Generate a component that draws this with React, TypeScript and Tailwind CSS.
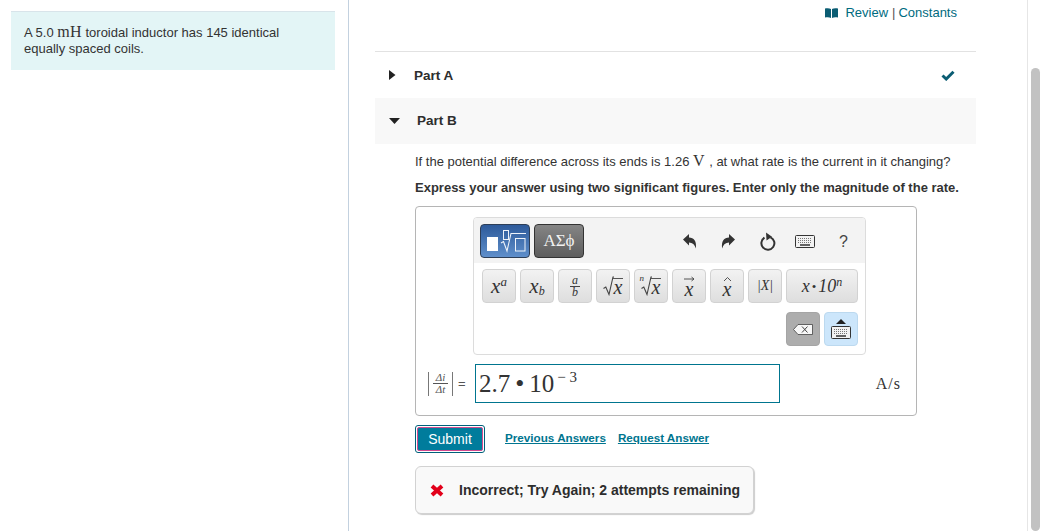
import React from "react";

const serif = "font-['Liberation_Serif','DejaVu_Serif',serif]";

function Kbd({ className = "" }: { className?: string }) {
  return (
    <svg width="20" height="13" viewBox="0 0 20 13" className={className}>
      <rect x="0.500" y="0.500" width="19" height="12" rx="1" fill="#f2f2f2" stroke="#333" />
      <path d="M3 3.500h14M3 5.500h14M3 7.500h14" stroke="#777" strokeWidth="1" strokeDasharray="1 1" />
      <path d="M5 10h10" stroke="#333" strokeWidth="1.400" />
    </svg>
  );
}

function Btn({ children, wide = false }: { children: React.ReactNode; wide?: boolean }) {
  return (
    <div
      className={`${wide ? "w-[72px]" : "w-[34px]"} h-[34px] shrink-0 rounded-[4px] border border-[#d2d2d2] bg-gradient-to-b from-[#f2f2f2] to-[#dedede] flex items-center justify-center text-[#333] ${serif} italic leading-none`}
    >
      {children}
    </div>
  );
}

function Radical() {
  return (
    <svg width="11" height="20" viewBox="0 0 11 20" className="-mr-px">
      <path d="M0.500 12.500L2.800 11L6 18.500L10 1H11" fill="none" stroke="#444" strokeWidth="1.100" />
    </svg>
  );
}

function Rooted() {
  return <span className="border-t border-[#555] text-[20px] leading-[17px] h-[18px] mt-[1px] px-px">x</span>;
}

export default function App() {
  return (
    <div className="w-[1041px] h-[531px] overflow-hidden flex bg-white font-['Liberation_Sans',Arial,sans-serif] text-[#2d2d2d]">
      {/* left */}
      <aside className="w-[349px] shrink-0 h-full border-r border-[#c3d1df] pt-[11px] pl-[11px]">
        <div className="w-[324px] h-[59px] bg-[#e3f5f6] border-t border-[#d8e4ea] pl-[13px] pt-[12px] text-[13px] leading-[16px] text-[#333]">
          <p>
            A 5.0 <span className={`${serif} text-[16px] tracking-[0.3px]`}>mH</span> toroidal inductor has 145 identical
            <br />
            equally spaced coils.
          </p>
        </div>
      </aside>

      {/* main */}
      <main className="w-[678px] shrink-0 h-full pl-[26px]">
        <div className="w-[601px]">
          <div className="h-[51px] flex justify-end pr-[19px] pt-[5px] text-[13px] leading-[15px] text-[#006b80]">
            <div className="flex items-start">
              <svg width="13" height="10" viewBox="0 0 13 10" className="mt-[3px] mr-[7px]">
                <path d="M0 0.500C2 0 4.500 0 6 1V10C4.500 9 2 9 0 9.500Z M7 1C8.500 0 11 0 13 0.500V9.500C11 9 8.500 9 7 10Z" fill="#0b5d73" />
              </svg>
              <span>Review</span>
              <span className="text-[#555] ml-[4px] mr-[3px]">|</span>
              <span>Constants</span>
            </div>
          </div>

          {/* Part A */}
          <div className="h-[47px] border-t border-[#e2e2e2] flex items-center pl-[14px] pr-[21px]">
            <svg width="7" height="10" viewBox="0 0 7 10" className="mr-[18px]">
              <path d="M0 0L6.500 5L0 10Z" fill="#222" />
            </svg>
            <span className="font-bold text-[13.500px] mt-[2px]">Part A</span>
            <svg width="14" height="11" viewBox="0 0 14 11" className="ml-auto">
              <path d="M1.500 5.500L5.200 9L12.500 1.800" fill="none" stroke="#0b5d73" strokeWidth="3" />
            </svg>
          </div>

          {/* Part B */}
          <div className="h-[46px] bg-[#f8f8f8] flex items-center pl-[14px]">
            <svg width="11" height="6" viewBox="0 0 11 6" className="mr-[17px]">
              <path d="M0 0H11L5.500 6Z" fill="#222" />
            </svg>
            <span className="font-bold text-[13.500px]">Part B</span>
          </div>

          <div className="pl-[40px]">
            <p className="mt-[9px] text-[13px] leading-[16px] text-[#333] whitespace-nowrap">
              If the potential difference across its ends is 1.26 <span className={`${serif} text-[16px] pr-px`}>V</span> , at what rate is the current in it changing?
            </p>
            <p className="mt-[10px] text-[13px] leading-[16px] font-bold text-[#333] whitespace-nowrap">
              Express your answer using two significant figures. Enter only the magnitude of the rate.
            </p>

            {/* answer box */}
            <div className="mt-[10px] w-[502px] h-[210px] border border-[#b5b5b5] rounded-[4px] pt-[10px] pl-[57px] pr-[16px]">
              <div className="w-[393px] h-[138px] border border-[#dcdcdc] rounded-[4px] overflow-hidden">
                <div className="h-[45px] bg-[#f3f3f3] flex items-center pl-[6px] pr-[17px]">
                  <div className="w-[50px] h-[34px] rounded-[4px] border border-[#2d3e57] bg-gradient-to-b from-[#2d5a9a] to-[#5f8fcb] flex items-center justify-center">
                    <svg width="44" height="28" viewBox="0 0 44 28">
                      <rect x="4" y="10" width="11" height="14" fill="#fff" />
                      <rect x="20.500" y="3.500" width="5" height="9" fill="none" stroke="#eef3fa" strokeWidth="1" />
                      <path d="M18 16L20.500 14.500L24 24L28 6.500H43" fill="none" stroke="#eef3fa" strokeWidth="1.100" />
                      <rect x="32.500" y="11.500" width="9.500" height="12.500" fill="none" stroke="#eef3fa" strokeWidth="1" />
                    </svg>
                  </div>
                  <div className={`ml-[4px] w-[50px] h-[34px] rounded-[4px] border border-[#333] bg-gradient-to-b from-[#858585] to-[#5e5e5e] flex items-center justify-center text-[#f2f2f2] ${serif} text-[17px]`}>
                    ΑΣϕ
                  </div>
                  <div className="ml-auto flex items-center mt-[2px]">
                    <svg width="14" height="15" viewBox="0 0 14 15" className="mr-[24px]">
                      <path d="M0 5.500L6 0V3.400C10.800 3.400 14 7 12.800 14.500C11.800 10.500 9.500 8.500 6 8.500V11.500Z" fill="#333" />
                    </svg>
                    <svg width="14" height="15" viewBox="0 0 14 15" className="mr-[25px]">
                      <path d="M14 5.500L8 0V3.400C3.200 3.400 0 7 1.200 14.500C2.200 10.500 4.500 8.500 8 8.500V11.500Z" fill="#333" />
                    </svg>
                    <svg width="16" height="19" viewBox="0 0 16 19" className="mr-[19px]">
                      <path d="M10.500 5.300A6.500 6.500 0 1 1 4.500 5.700" fill="none" stroke="#333" strokeWidth="2" />
                      <path d="M6 0.500L12 4.800L6.500 8.500Z" fill="#333" />
                    </svg>
                    <Kbd className="mr-[24px]" />
                    <span className="text-[#444] text-[16px] leading-none">?</span>
                  </div>
                </div>
                <div className="bg-white pl-[8px] pt-[6px]">
                  <div className="flex gap-[4px]">
                    <Btn>
                      <span className="text-[21px]">x</span>
                      <span className="text-[13px] mb-[9px]">a</span>
                    </Btn>
                    <Btn>
                      <span className="text-[21px]">x</span>
                      <span className="text-[12px] mt-[9px]">b</span>
                    </Btn>
                    <Btn>
                      <span className="flex flex-col items-center text-[12px] leading-[11px]">
                        <span>a</span>
                        <span className="w-[10px] h-px bg-[#444]" />
                        <span>b</span>
                      </span>
                    </Btn>
                    <Btn>
                      <Radical />
                      <Rooted />
                    </Btn>
                    <Btn>
                      <span className="w-0 text-[9px] -translate-y-[8px] -translate-x-[1px]">n</span>
                      <Radical />
                      <Rooted />
                    </Btn>
                    <Btn>
                      <span className="flex flex-col items-center">
                        <svg width="11" height="6" viewBox="0 0 11 6">
                          <path d="M0 3H10M7.500 1L10 3L7.500 5" fill="none" stroke="#444" strokeWidth="0.900" />
                        </svg>
                        <span className="text-[20px] leading-[15px]">x</span>
                      </span>
                    </Btn>
                    <Btn>
                      <span className="flex flex-col items-center">
                        <svg width="9" height="6" viewBox="0 0 9 6">
                          <path d="M1 5L4.500 1.500L8 5" fill="none" stroke="#444" strokeWidth="0.900" />
                        </svg>
                        <span className="text-[20px] leading-[15px]">x</span>
                      </span>
                    </Btn>
                    <Btn>
                      <span className="text-[14px]">|X|</span>
                    </Btn>
                    <Btn wide>
                      <span className="text-[18px]">x</span>
                      <span className="not-italic text-[13px] mx-[2px]">•</span>
                      <span className="text-[18px]">10</span>
                      <span className="text-[12px] mb-[8px]">n</span>
                    </Btn>
                  </div>
                  <div className="w-[376px] flex justify-end gap-[4px] mt-[9px]">
                    <div className="w-[34px] h-[34px] rounded-[4px] bg-[#adadad] border border-[#a5a5a5] flex items-center justify-center">
                      <svg width="20" height="11" viewBox="0 0 20 11">
                        <path d="M5 0.500H19.500V10.500H5L0.500 5.500Z" fill="#f7f7f7" stroke="#444" strokeWidth="0.800" />
                        <path d="M9 2.500L14.500 8.500M14.500 2.500L9 8.500" stroke="#444" strokeWidth="1" />
                      </svg>
                    </div>
                    <div className="w-[34px] h-[34px] rounded-[4px] bg-[#cce6fb] border border-[#bcd9ef] flex flex-col items-center justify-center">
                      <svg width="10" height="5" viewBox="0 0 10 5" className="mb-[2px]">
                        <path d="M0 5L5 0L10 5Z" fill="#222" />
                      </svg>
                      <Kbd />
                    </div>
                  </div>
                </div>
              </div>

              {/* input row */}
              <div className="mt-[9px] flex items-center h-[39px] -ml-[45px] w-[473px]">
                <div className={`w-[39px] h-[24px] flex items-center text-[#555] ${serif}`}>
                  <span className="w-px h-[24px] bg-[#777]" />
                  <span className="flex flex-col items-center mx-[4px] text-[11px] leading-[11px] italic">
                    <span>Δi</span>
                    <span className="w-[15px] h-px bg-[#555]" />
                    <span>Δt</span>
                  </span>
                  <span className="w-px h-[24px] bg-[#777]" />
                  <span className="ml-[5px] not-italic text-[13px] font-['Liberation_Sans',sans-serif]">=</span>
                </div>
                <div className={`ml-[8px] w-[305px] h-[39px] border border-[#00758f] flex items-center pl-[3px] ${serif} text-[25px] text-[#333] leading-none`}>
                  <span>2.7</span>
                  <span className="mx-[5px] text-[26px]">•</span>
                  <span>10</span>
                  <span className="text-[15px] mb-[13px] ml-[3px]">− 3</span>
                </div>
                <span className={`ml-auto ${serif} text-[16px] tracking-[1px] text-[#333]`}>A/s</span>
              </div>
            </div>

            {/* submit */}
            <div className="mt-[8px] flex items-center h-[29px]">
              <div className="w-[70px] h-[28px] rounded-[3px] border border-[#00607a] p-px bg-white">
                <div className="w-full h-full rounded-[2px] border border-[#d14a8f] bg-[#007c9c] flex items-center justify-center text-white text-[14px] pt-px">
                  Submit
                </div>
              </div>
              <span className="ml-[20px] text-[11.700px] font-bold text-[#00758f] underline -mt-[1px]">Previous Answers</span>
              <span className="ml-[12px] text-[11.700px] font-bold text-[#00758f] underline -mt-[1px]">Request Answer</span>
            </div>

            {/* feedback */}
            <div className="mt-[13px] w-[339px] h-[48px] rounded-[6px] border border-[#d2d2d2] bg-[#f9f9f9] shadow-[1px_1px_1px_rgba(0,0,0,0.2)] flex items-center pl-[14px]">
              <svg width="14" height="13" viewBox="0 0 14 13" className="mr-[15px]">
                <path d="M2 2L12 11M12 2L2 11" stroke="#e2001a" strokeWidth="4" />
              </svg>
              <span className="text-[14px] font-bold text-[#2d2d2d] whitespace-nowrap">Incorrect; Try Again; 2 attempts remaining</span>
            </div>
          </div>
        </div>
      </main>

      {/* scrollbar */}
      <div className="flex-1 h-full border-l border-[#e6e6e6] pt-[68px] pl-[3px]">
        <div className="w-[9px] h-full rounded-[5px] bg-[#c2c2c2]" />
      </div>
    </div>
  );
}
